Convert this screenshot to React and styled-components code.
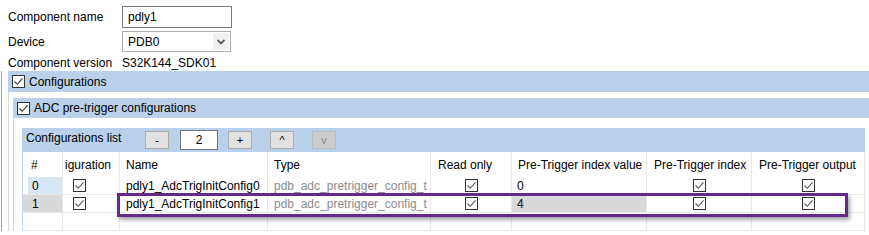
import React from "react";
import styled, { createGlobalStyle } from "styled-components";

const Global = createGlobalStyle`
  html, body { margin: 0; padding: 0; background: #fff; }
  body { font-family: "Liberation Sans", Arial, sans-serif; font-size: 12px; color: #000; }
  * { box-sizing: border-box; }
`;

const Page = styled.div`
  width: 869px;
  height: 235px;
  overflow: hidden;
  padding-top: 6px;
`;

const Form = styled.div`
  display: grid;
  grid-template-columns: 114px auto;
  row-gap: 3px;
  padding-left: 8px;
  align-items: center;
`;

const Label = styled.div`
  line-height: 16px;
`;

const TextBox = styled.div`
  width: 110px;
  height: 22px;
  border: 1px solid #7a7a7a;
  padding: 0 5px;
  line-height: 20px;
`;

const Select = styled.div`
  width: 109px;
  height: 21px;
  border: 1px solid #adadad;
  display: flex;
  align-items: center;
  justify-content: space-between;
  padding: 0 1px 0 5px;
`;

const DropBtn = styled.div`
  width: 16px;
  height: 17px;
  background: #f0f0f0;
  display: flex;
  align-items: center;
  justify-content: center;
`;

const Value = styled.div`
  line-height: 16px;
  height: 16px;
`;

const Outer = styled.div`
  margin-left: 1px;
  border-left: 1px solid #a0a0a0;
  padding-left: 6px;
`;

const Section = styled.div`
  border-left: 1px solid ${(p) => p.$line};
`;

const Band = styled.div`
  height: ${(p) => p.$h}px;
  background: #b9d1ea;
  display: flex;
  align-items: center;
  padding-left: ${(p) => p.$pl}px;
  gap: 4px;
  margin-left: -1px;
`;

const SectionBody = styled.div`
  padding: ${(p) => p.$pt}px 0 0 ${(p) => p.$pl}px;
`;

const Box = styled.span`
  width: 13px;
  height: 13px;
  border: 1px solid #333;
  background: #fff;
  display: inline-flex;
  align-items: center;
  justify-content: center;
  flex: none;
`;

const Check = ({ color = "#333" }) => (
  <Box>
    <svg width="11" height="11" viewBox="0 0 11 11">
      <path d="M1.5 5.5 L4.3 8.3 L9.5 2.3" fill="none" stroke={color} strokeWidth="1.1" />
    </svg>
  </Box>
);

const TableWrap = styled.div`
  position: relative;
  width: 843px;
  border-left: 1px solid #c5d7ec;
`;

const ListBar = styled.div`
  height: 24px;
  background: #b9d1ea;
  display: flex;
  align-items: center;
  padding-left: 4px;
  margin-left: -1px;
`;

const ListTitle = styled.div`
  width: 119px;
  margin-top: -4px;
`;

const Btn = styled.div`
  width: 24px;
  height: 18px;
  background: ${(p) => (p.$disabled ? "#cccccc" : "#e1e1e1")};
  border: 1px solid ${(p) => (p.$disabled ? "#bfbfbf" : "#adadad")};
  color: ${(p) => (p.$disabled ? "#8a8a8a" : "#000")};
  display: flex;
  align-items: center;
  justify-content: center;
  font-size: 11px;
  margin-left: ${(p) => p.$ml}px;
`;

const Spin = styled.div`
  width: 38px;
  height: 20px;
  background: #fff;
  border: 1px solid #7a7a7a;
  display: flex;
  align-items: center;
  justify-content: center;
  margin-left: 11px;
`;

const Grid = styled.div`
  display: grid;
  grid-template-columns: 40px 57px 148px 163px 81px 135px 105px 113px;
  grid-template-rows: 25px 18px 18px 18px;
  width: 842px;
  border-right: 1px solid #e3e3e3;
`;

const Head = styled.div`
  display: flex;
  align-items: center;
  padding-left: ${(p) => p.$pl}px;
  border-right: 1px solid #e8e8e8;
  white-space: nowrap;
  overflow: hidden;
`;

const Cell = styled.div`
  display: flex;
  align-items: center;
  justify-content: ${(p) => (p.$center ? "center" : "flex-start")};
  padding-left: ${(p) => p.$pl || 0}px;
  border-right: 1px solid #e8e8e8;
  border-bottom: 1px solid #e8e8e8;
  white-space: nowrap;
  overflow: hidden;
  color: ${(p) => (p.$muted ? "#8c8c8c" : "#000")};
  background: ${(p) =>
    p.$tone === "blue"
      ? "linear-gradient(to right, transparent 5px, #d9e6f4 5px)"
      : p.$tone === "gray"
      ? "#d9d9d9"
      : "transparent"};
`;

const Row = styled.div`
  display: contents;
`;

const Highlight = styled.div`
  position: absolute;
  left: 94px;
  top: 65px;
  width: 731px;
  height: 24px;
  border: 3px solid #65288c;
  box-shadow: 2px 3px 4px rgba(0, 0, 0, 0.35);
  pointer-events: none;
`;

const heads = [
  { t: "#", pl: 8 },
  { t: "iguration", pl: 2 },
  { t: "Name", pl: 6 },
  { t: "Type", pl: 6 },
  { t: "Read only", pl: 7 },
  { t: "Pre-Trigger index value", pl: 6 },
  { t: "Pre-Trigger index", pl: 7 },
  { t: "Pre-Trigger output", pl: 7 },
];

const rows = [
  { n: "0", name: "pdly1_AdcTrigInitConfig0", v: "0", tone: "blue" },
  { n: "1", name: "pdly1_AdcTrigInitConfig1", v: "4", tone: "gray" },
];

export default function App() {
  return (
    <Page>
      <Global />
      <Form>
        <Label>Component name</Label>
        <TextBox>pdly1</TextBox>
        <Label>Device</Label>
        <Select>
          <span>PDB0</span>
          <DropBtn>
            <svg width="8" height="6" viewBox="0 0 8 6">
              <path d="M0.5 1 L4 4.5 L7.5 1" fill="none" stroke="#5a5a5a" strokeWidth="1.8" />
            </svg>
          </DropBtn>
        </Select>
        <Label>Component version</Label>
        <Value>S32K144_SDK01</Value>
      </Form>
      <Outer>
        <Section $line="#d8d8d8">
          <Band $h={21} $pl={4}>
            <Check />
            <span>Configurations</span>
          </Band>
          <SectionBody $pt={6} $pl={4}>
            <Section $line="#c5d7ec">
              <Band $h={20} $pl={4}>
                <Check />
                <span>ADC pre-trigger configurations</span>
              </Band>
              <SectionBody $pt={10} $pl={8}>
                <TableWrap>
                  <ListBar>
                    <ListTitle>Configurations list</ListTitle>
                    <Btn $ml={0}>-</Btn>
                    <Spin>2</Spin>
                    <Btn $ml={10}>+</Btn>
                    <Btn $ml={18}>^</Btn>
                    <Btn $ml={18} $disabled>v</Btn>
                  </ListBar>
                  <Grid>
                    <Row>
                      {heads.map((h) => (
                        <Head key={h.t} $pl={h.pl}>
                          {h.t}
                        </Head>
                      ))}
                    </Row>
                    {rows.map((r) => (
                      <Row key={r.n}>
                        <Cell $pl={9} $tone={r.tone}>{r.n}</Cell>
                        <Cell $pl={10}><Check color="#555" /></Cell>
                        <Cell $pl={6}>{r.name}</Cell>
                        <Cell $pl={6} $muted>pdb_adc_pretrigger_config_t</Cell>
                        <Cell $center><Check color="#555" /></Cell>
                        <Cell $pl={5} $tone={r.tone === "gray" ? "gray" : undefined}>{r.v}</Cell>
                        <Cell $center><Check color="#555" /></Cell>
                        <Cell $center><Check color="#555" /></Cell>
                      </Row>
                    ))}
                    <Row>
                      {heads.map((h) => (
                        <Cell key={h.t} />
                      ))}
                    </Row>
                  </Grid>
                  <Highlight />
                </TableWrap>
              </SectionBody>
            </Section>
          </SectionBody>
        </Section>
      </Outer>
    </Page>
  );
}
